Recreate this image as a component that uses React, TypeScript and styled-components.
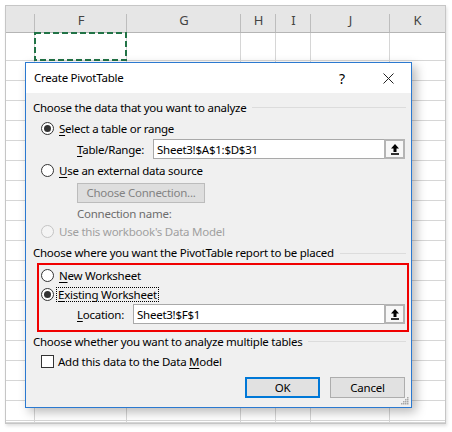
import React from 'react';
import styled, { createGlobalStyle } from 'styled-components';

const FONT = `"Noto Sans", "Open Sans", sans-serif`;

const GlobalStyle = createGlobalStyle`
  html, body { margin: 0; padding: 0; background: #fff; }
  body { width: 452px; height: 432px; overflow: hidden; font-family: ${FONT}; }
`;

const Page = styled.div`
  position: relative;
  width: 452px;
  height: 432px;
  padding: 5px 0 0 5px;
  box-sizing: border-box;
`;

const Sheet = styled.div`
  width: 441px;
  height: 419px;
  box-sizing: border-box;
  border: 1px solid #c6c6c6;
  box-shadow: 1px 2px 3px rgba(0, 0, 0, 0.12);
  display: grid;
  grid-template-columns: 29px 92px 114px 35px 35px 79px 55px;
  grid-template-rows: 27px 28px repeat(18, 20px) 2px;
  overflow: hidden;
  background: #fff;
`;

const HeadCell = styled.div<{ $last?: boolean }>`
  box-sizing: border-box;
  background: ${(p) =>
    p.$last
      ? '#e6e6e6'
      : 'linear-gradient(#bdbdbd, #bdbdbd) right 8px / 1px calc(100% - 8px) no-repeat, #e6e6e6'};
  border-bottom: 1px solid #b5b5b5;
  display: flex;
  align-items: center;
  justify-content: center;
  padding-top: 2px;
  font-family: ${FONT};
  font-size: 13px;
  color: #444;
`;

const Cell = styled.div<{ $last?: boolean }>`
  box-sizing: border-box;
  position: relative;
  border-right: ${(p) => (p.$last ? 'none' : '1px solid #d6d6d6')};
  border-bottom: 1px solid #d6d6d6;
`;

const Marquee = styled.svg`
  position: absolute;
  left: -1px;
  top: -1px;
  overflow: visible;
`;

const Dialog = styled.div`
  position: absolute;
  left: 25px;
  top: 62px;
  width: 387px;
  height: 346px;
  box-sizing: border-box;
  border: 1px solid #2b79d0;
  background: #f0f0f0;
  box-shadow: 4px 4px 10px rgba(0, 0, 0, 0.28);
  display: flex;
  flex-direction: column;
  font-family: ${FONT};
  font-size: 11.5px;
  letter-spacing: -0.25px;
  color: #000;
`;

const TitleBar = styled.div`
  height: 30px;
  background: #fff;
  display: flex;
  align-items: center;
  padding-left: 8px;
`;

const TitleText = styled.div`
  flex: 1;
  color: #000;
  padding-bottom: 1px;
`;

const TitleButton = styled.div`
  width: 46px;
  height: 30px;
  display: flex;
  align-items: center;
  justify-content: center;
  font-size: 14px;
  color: #000;
`;

const Content = styled.div`
  display: flex;
  flex-direction: column;
  padding: 4px 2px 0 7px;
`;

const Heading = styled.div<{ $h: number; $mt?: number }>`
  height: ${(p) => p.$h}px;
  margin-top: ${(p) => p.$mt ?? 0}px;
  display: flex;
  align-items: center;
  white-space: nowrap;
`;

const HeadLine = styled.div`
  flex: 1;
  height: 1px;
  background: #dcdcdc;
  margin: 1px 3px 0 6px;
`;

const OptionRow = styled.div<{ $h: number; $indent: number; $disabled?: boolean }>`
  height: ${(p) => p.$h}px;
  display: flex;
  align-items: center;
  padding-left: ${(p) => p.$indent}px;
  color: ${(p) => (p.$disabled ? '#a0a0a0' : '#000')};
  white-space: nowrap;
`;

const Radio = styled.span<{ $checked?: boolean; $disabled?: boolean }>`
  width: 13px;
  height: 13px;
  box-sizing: border-box;
  border-radius: 50%;
  border: 1px solid ${(p) => (p.$disabled ? '#c4c4c4' : '#333')};
  background: ${(p) => (p.$disabled ? '#f4f4f4' : '#fff')};
  display: flex;
  align-items: center;
  justify-content: center;
  margin-right: 5px;
  flex: none;
  &::after {
    content: '';
    display: ${(p) => (p.$checked ? 'block' : 'none')};
    width: 7px;
    height: 7px;
    border-radius: 50%;
    background: #333;
  }
`;

const Check = styled.span`
  width: 13px;
  height: 13px;
  box-sizing: border-box;
  border: 1px solid #333;
  background: #fff;
  margin-right: 4px;
  flex: none;
`;

const Focus = styled.span`
  outline: 1px dotted #000;
  outline-offset: 0;
  padding: 0 1px;
  margin-left: -2px;
  line-height: 13px;
`;

const Key = styled.span`
  text-decoration: underline;
  text-underline-offset: 2px;
`;

const FieldRow = styled.div<{ $h: number; $indent: number; $pr?: number; $disabled?: boolean }>`
  height: ${(p) => p.$h}px;
  display: flex;
  align-items: center;
  padding-left: ${(p) => p.$indent}px;
  padding-right: ${(p) => p.$pr ?? 4}px;
  color: ${(p) => (p.$disabled ? '#6d6d6d' : '#000')};
  white-space: nowrap;
`;

const Label = styled.span<{ $w: number }>`
  width: ${(p) => p.$w}px;
  flex: none;
`;

const RefEdit = styled.div`
  flex: 1;
  height: 20px;
  box-sizing: border-box;
  border: 1px solid #a9a9a9;
  background: #fff;
  display: flex;
  align-items: center;
`;

const RefValue = styled.span`
  flex: 1;
  padding-left: 3px;
`;

const RefButton = styled.span`
  width: 21px;
  height: 20px;
  margin: -1px -1px -1px 0;
  box-sizing: border-box;
  border: 2px solid #b4b4b4;
  background: #f7f7f7;
  display: flex;
  align-items: center;
  justify-content: center;
  flex: none;
`;

const DisabledButton = styled.div`
  width: 128px;
  height: 20px;
  box-sizing: border-box;
  border: 1px solid #bcbcbc;
  background: #dedede;
  color: #838383;
  display: flex;
  align-items: center;
  justify-content: center;
`;

const PlaceBox = styled.div`
  height: 69px;
  box-sizing: border-box;
  margin-left: 4px;
  border: 2px solid #f00000;
  display: flex;
  flex-direction: column;
`;

const ButtonBar = styled.div`
  display: flex;
  justify-content: flex-end;
  gap: 10px;
  margin-top: 5px;
  padding-right: 4px;
`;

const PushButton = styled.div<{ $default?: boolean }>`
  width: 75px;
  height: 21px;
  box-sizing: border-box;
  border: ${(p) => (p.$default ? '2px solid #0078d7' : '1px solid #adadad')};
  background: #e1e1e1;
  display: flex;
  align-items: center;
  justify-content: center;
`;

const Grip = styled.svg`
  position: absolute;
  right: 1px;
  bottom: 1px;
`;

const UpArrow = () => (
  <svg width="10" height="11" viewBox="0 0 10 11">
    <path d="M5 0 L9 4.5 L6.5 4.5 L6.5 8 L3.5 8 L3.5 4.5 L1 4.5 Z" fill="#000" />
    <rect x="1" y="9.2" width="8" height="1.6" fill="#000" />
  </svg>
);

const CloseIcon = () => (
  <svg width="11" height="11" viewBox="0 0 11 11">
    <path d="M0.5 0.5 L10.5 10.5 M10.5 0.5 L0.5 10.5" stroke="#222" strokeWidth="1" fill="none" />
  </svg>
);

const columns = ['', 'F', 'G', 'H', 'I', 'J', 'K'];
const rowCount = 20;

export default function App() {
  return (
    <Page>
      <GlobalStyle />
      <Sheet>
        {columns.map((c, i) => (
          <HeadCell key={`h${i}`} $last={i === columns.length - 1}>
            {c}
          </HeadCell>
        ))}
        {Array.from({ length: rowCount }).map((_, r) =>
          columns.map((_c, i) => (
            <Cell key={`c${r}-${i}`} $last={i === columns.length - 1}>
              {r === 0 && i === 1 && (
                <Marquee width="93" height="29" viewBox="0 0 93 29">
                  <rect
                    x="1"
                    y="1"
                    width="91"
                    height="27"
                    fill="none"
                    stroke="#217346"
                    strokeWidth="2"
                    strokeDasharray="6 3"
                  />
                </Marquee>
              )}
            </Cell>
          ))
        )}
      </Sheet>

      <Dialog>
        <TitleBar>
          <TitleText>Create PivotTable</TitleText>
          <TitleButton>?</TitleButton>
          <TitleButton>
            <CloseIcon />
          </TitleButton>
        </TitleBar>
        <Content>
          <Heading $h={20}>
            Choose the data that you want to analyze
            <HeadLine />
          </Heading>
          <OptionRow $h={22} $indent={8}>
            <Radio $checked />
            <span>
              <Key>S</Key>elect a table or range
            </span>
          </OptionRow>
          <FieldRow $h={20} $indent={44}>
            <Label $w={76}>
              <Key>T</Key>able/Range:
            </Label>
            <RefEdit>
              <RefValue>Sheet3!$A$1:$D$31</RefValue>
              <RefButton>
                <UpArrow />
              </RefButton>
            </RefEdit>
          </FieldRow>
          <OptionRow $h={22} $indent={8}>
            <Radio />
            <span>
              <Key>U</Key>se an external data source
            </span>
          </OptionRow>
          <FieldRow $h={23} $indent={44}>
            <DisabledButton>Choose Connection...</DisabledButton>
          </FieldRow>
          <FieldRow $h={18} $indent={44} $disabled>
            Connection name:
          </FieldRow>
          <OptionRow $h={18} $indent={8} $disabled>
            <Radio $disabled />
            Use this workbook's Data Model
          </OptionRow>
          <Heading $h={21} $mt={2}>
            Choose where you want the PivotTable report to be placed
            <HeadLine />
          </Heading>
          <PlaceBox>
            <OptionRow $h={20} $indent={2}>
              <Radio />
              <span>
                <Key>N</Key>ew Worksheet
              </span>
            </OptionRow>
            <OptionRow $h={18} $indent={2}>
              <Radio $checked />
              <Focus>
                <Key>E</Key>xisting Worksheet
              </Focus>
            </OptionRow>
            <FieldRow $h={22} $indent={38} $pr={2}>
              <Label $w={56}>
                <Key>L</Key>ocation:
              </Label>
              <RefEdit>
                <RefValue>Sheet3!$F$1</RefValue>
                <RefButton>
                  <UpArrow />
                </RefButton>
              </RefEdit>
            </FieldRow>
          </PlaceBox>
          <Heading $h={18}>
            Choose whether you want to analyze multiple tables
            <HeadLine />
          </Heading>
          <OptionRow $h={22} $indent={8}>
            <Check />
            <span>
              Add this data to the Data <Key>M</Key>odel
            </span>
          </OptionRow>
          <ButtonBar>
            <PushButton $default>OK</PushButton>
            <PushButton>Cancel</PushButton>
          </ButtonBar>
        </Content>
        <Grip width="11" height="11" viewBox="0 0 11 11">
          <g fill="#a8a8a8">
            <rect x="8" y="2" width="1.5" height="1.5" />
            <rect x="6" y="4" width="1.5" height="1.5" />
            <rect x="8" y="4" width="1.5" height="1.5" />
            <rect x="4" y="6" width="1.5" height="1.5" />
            <rect x="6" y="6" width="1.5" height="1.5" />
            <rect x="8" y="6" width="1.5" height="1.5" />
            <rect x="2" y="8" width="1.5" height="1.5" />
            <rect x="4" y="8" width="1.5" height="1.5" />
            <rect x="6" y="8" width="1.5" height="1.5" />
            <rect x="8" y="8" width="1.5" height="1.5" />
          </g>
        </Grip>
      </Dialog>
    </Page>
  );
}
